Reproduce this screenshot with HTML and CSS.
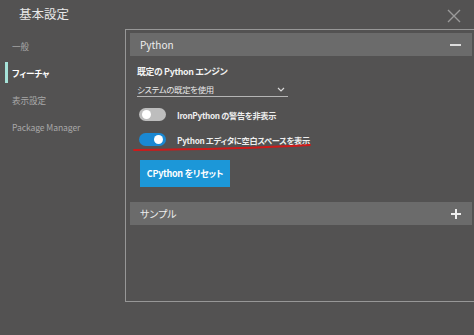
FILE: index.html
```html
<!DOCTYPE html>
<html lang="ja">
<head>
  <meta charset="UTF-8">
  <meta name="viewport" content="width=device-width, initial-scale=1.0">
  <title>基本設定</title>
  <link rel="stylesheet" href="styles.css">
</head>
<body>
  <div class="window">
    <div class="titlebar">
      <span class="title">基本設定</span>
      <svg class="close" width="14" height="14" viewBox="0 0 14 14">
        <path d="M1 1 L13 13 M13 1 L1 13" stroke="#9a9a9a" stroke-width="1.4" fill="none"/>
      </svg>
    </div>

    <div class="main">
      <ul class="sidebar">
        <li>一般</li>
        <li class="active">フィーチャ</li>
        <li>表示設定</li>
        <li>Package Manager</li>
      </ul>

      <div class="panel">
        <div class="section-head">
          <span>Python</span>
          <span class="minus"></span>
        </div>
        <div class="section-body">
          <div class="field-label">既定の Python エンジン</div>
          <div class="select">
            <span>システムの既定を使用</span>
            <svg width="8" height="5" viewBox="0 0 8 5">
              <path d="M1 1 L4 4 L7 1" stroke="#d8d8d8" stroke-width="1.2" fill="none"/>
            </svg>
          </div>
          <div class="toggle-row">
            <span class="toggle"></span>
            <span>IronPython の警告を非表示</span>
          </div>
          <div class="toggle-row second">
            <span class="toggle on"></span>
            <span>Python エディタに空白スペースを表示</span>
          </div>
          <a href="#" class="button">CPython をリセット</a>
        </div>
        <div class="section-head">
          <span>サンプル</span>
          <span class="plus"></span>
        </div>

        <!-- hand-drawn red mark under the second toggle -->
        <svg class="mark" width="182" height="10" viewBox="0 0 182 10">
          <path d="M1 7 C 60 6.5, 125 5, 177 2" stroke="#cf1a1a" stroke-width="1.8" fill="none" stroke-linecap="round"/>
        </svg>
      </div>
    </div>
  </div>
</body>
</html>
```

FILE: styles.css
```css
* {
  box-sizing: border-box;
  margin: 0;
  padding: 0;
}

body {
  font-family: "Noto Sans CJK JP", "Noto Sans", sans-serif;
  font-feature-settings: "palt";
  background-color: #535252;
  color: #e6e6e6;
  overflow: hidden;
}

.window {
  width: 474px;
  height: 335px;
}

.titlebar {
  height: 29px;
  display: flex;
  align-items: center;
  justify-content: space-between;
  padding: 0 13px 0 19px;
}

.title {
  font-size: 12.5px;
  color: #e8e8e8;
  margin-top: -2px;
}

.close {
  margin-top: 2px;
}

.main {
  display: flex;
}

.sidebar {
  list-style: none;
  width: 125px;
  padding: 3px 0 0 5px;
  flex-shrink: 0;
}

.sidebar li {
  height: 27px;
  display: flex;
  align-items: center;
  padding-left: 7px;
  font-size: 8.6px;
  letter-spacing: -0.1px;
  color: #a8a8a8;
}

.sidebar li.active {
  color: #ffffff;
  font-weight: bold;
  border-left: 3px solid #a6e2d8;
  padding-left: 4px;
  height: 21px;
  margin: 3px 0;
}

.panel {
  position: relative;
  width: 352px;
  height: 273px;
  flex-shrink: 0;
  border: 1px solid #979797;
  padding: 3px 4px;
}

.section-head {
  height: 23px;
  background-color: #6b6b6b;
  display: flex;
  align-items: center;
  justify-content: space-between;
  padding: 0 11px 0 10px;
  font-size: 10px;
  color: #eeeeee;
}

.minus {
  width: 11px;
  height: 2px;
  background-color: #dddddd;
}

.plus {
  position: relative;
  width: 10px;
  height: 10px;
}

.plus::before,
.plus::after {
  content: "";
  position: absolute;
  background-color: #eeeeee;
}

.plus::before {
  left: 0;
  top: 4px;
  width: 10px;
  height: 2px;
}

.plus::after {
  left: 4px;
  top: 0;
  width: 2px;
  height: 10px;
}

.section-body {
  padding: 10px 0 15px 7px;
  font-size: 9px;
  letter-spacing: -0.3px;
}

.field-label {
  height: 12px;
  line-height: 12px;
  font-weight: bold;
  font-size: 8.8px;
  color: #f2f2f2;
}

.select {
  width: 151px;
  margin-top: 6px;
  height: 13px;
  border-bottom: 1px solid #b5b5b5;
  display: flex;
  align-items: center;
  justify-content: space-between;
  padding: 0 3px 2px 0;
  color: #e8e8e8;
  font-size: 8.4px;
}

.toggle-row {
  display: flex;
  align-items: center;
  gap: 11px;
  margin-top: 11px;
  padding-left: 2px;
  color: #eeeeee;
  font-weight: bold;
  font-size: 8.2px;
}

.toggle-row.second {
  margin-top: 12px;
}

.toggle {
  position: relative;
  width: 27px;
  height: 13px;
  border-radius: 7px;
  background-color: #bdbdbd;
}

.toggle::after {
  content: "";
  position: absolute;
  top: 2px;
  left: 3px;
  width: 9px;
  height: 9px;
  border-radius: 50%;
  background-color: #ffffff;
}

.toggle.on {
  background-color: #1a88d2;
}

.toggle.on::after {
  left: 15px;
}

.button {
  display: inline-flex;
  align-items: center;
  justify-content: center;
  width: 90px;
  height: 27px;
  margin: 14px 0 0 3px;
  background-color: #1c97d8;
  color: #ffffff;
  text-decoration: none;
  font-weight: bold;
  font-size: 9px;
}

.mark {
  position: absolute;
  left: 7px;
  top: 113px;
}
```
